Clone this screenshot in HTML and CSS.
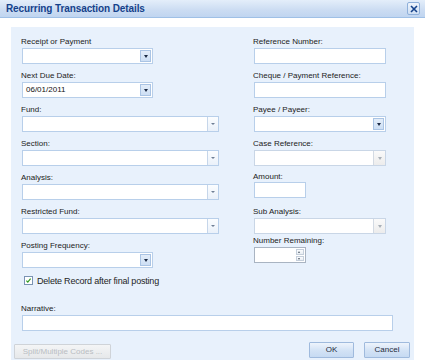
FILE: index.html
```html
<!DOCTYPE html>
<html>
<head>
<meta charset="utf-8">
<link rel="stylesheet" href="styles.css">
</head>
<body>
<div class="dialog">
  <div class="titlebar">
    <span class="title">Recurring Transaction Details</span>
    <span class="close"><svg width="8" height="8" viewBox="0 0 8 8"><path d="M1 1L7 7M7 1L1 7" stroke="#15428b" stroke-width="1.6"/></svg></span>
  </div>
  <div class="body">
    <div class="panel">
      <div class="cols">
        <div class="col col-left">
          <div class="field">
            <div class="label">Receipt or Payment</div>
            <div class="combo w-short"><span class="val"></span><span class="dd"><i class="tri"></i></span></div>
          </div>
          <div class="field">
            <div class="label">Next Due Date:</div>
            <div class="combo w-short"><span class="val">06/01/2011</span><span class="dd"><i class="tri"></i></span></div>
          </div>
          <div class="field">
            <div class="label">Fund:</div>
            <div class="combo w-long"><span class="val"></span><span class="dd light"><i class="tri"></i></span></div>
          </div>
          <div class="field">
            <div class="label">Section:</div>
            <div class="combo w-long"><span class="val"></span><span class="dd light"><i class="tri"></i></span></div>
          </div>
          <div class="field">
            <div class="label">Analysis:</div>
            <div class="combo w-long"><span class="val"></span><span class="dd light"><i class="tri"></i></span></div>
          </div>
          <div class="field">
            <div class="label">Restricted Fund:</div>
            <div class="combo w-long"><span class="val"></span><span class="dd light"><i class="tri"></i></span></div>
          </div>
          <div class="field last">
            <div class="label">Posting Frequency:</div>
            <div class="combo w-short"><span class="val"></span><span class="dd"><i class="tri"></i></span></div>
          </div>
          <div class="check">
            <span class="box"><svg width="9" height="9" viewBox="0 0 9 9"><path d="M1.8 4.6L3.6 6.6L7.2 2" fill="none" stroke="#2f9a1e" stroke-width="1.5"/></svg></span>
            <span class="check-text">Delete Record after final posting</span>
          </div>
        </div>
        <div class="col col-right">
          <div class="field">
            <div class="label">Reference Number:</div>
            <div class="text w-mid"></div>
          </div>
          <div class="field">
            <div class="label">Cheque / Payment Reference:</div>
            <div class="text w-mid"></div>
          </div>
          <div class="field">
            <div class="label">Payee / Payeer:</div>
            <div class="combo w-mid"><span class="val"></span><span class="dd"><i class="tri"></i></span></div>
          </div>
          <div class="field">
            <div class="label">Case Reference:</div>
            <div class="combo w-mid disabled"><span class="val"></span><span class="dd off"><i class="tri"></i></span></div>
          </div>
          <div class="field amount">
            <div class="label">Amount:</div>
            <div class="text w-tiny"></div>
          </div>
          <div class="field sub">
            <div class="label">Sub Analysis:</div>
            <div class="combo w-mid disabled"><span class="val"></span><span class="dd off"><i class="tri"></i></span></div>
          </div>
          <div class="field">
            <div class="label">Number Remaining:</div>
            <div class="spinner w-tiny"><span class="val"></span><span class="spin"><i class="up"></i><i class="down"></i></span></div>
          </div>
        </div>
      </div>
      <div class="field narrative">
        <div class="label">Narrative:</div>
        <div class="text w-full"></div>
      </div>
      <div class="buttons">
        <span class="btn btn-disabled">Split/Multiple Codes ...</span>
        <span class="spacer"></span>
        <span class="btn btn-ok">OK</span>
        <span class="btn btn-cancel">Cancel</span>
      </div>
    </div>
  </div>
</div>
</body>
</html>
```

FILE: styles.css
```css
html, body {
  margin: 0;
  padding: 0;
  background: #ffffff;
}
.dialog {
  width: 425px;
  height: 362px;
  font-family: "Liberation Sans", Arial, sans-serif;
  color: #1e1e1e;
  background: #ffffff;
  overflow: hidden;
}
.titlebar {
  height: 17px;
  border-bottom: 1px solid #9fc0e6;
  background: linear-gradient(#e4eefa, #cbdcf2 60%, #c0d5f0);
  display: flex;
  align-items: center;
  padding: 0 5px 0 6px;
}
.title {
  flex: 1;
  font-size: 10px;
  font-weight: bold;
  color: #15428b;
  letter-spacing: -0.1px;
}
.close {
  width: 11px;
  height: 11px;
  border: 1px solid #8fb0da;
  border-radius: 2px;
  background: linear-gradient(#eef4fc, #cfdff3);
  display: flex;
  align-items: center;
  justify-content: center;
}
.body {
  padding: 9px 11px 0 11px;
}
.panel {
  height: 333px;
  box-sizing: border-box;
  background: #e8f1fc;
  padding: 9px 0 0 10px;
}
.cols {
  display: flex;
}
.col-left {
  width: 230px;
}
.col-right {
  width: 150px;
  padding-left: 2px;
}
.field {
  margin-bottom: 6px;
}
.label {
  font-size: 8px;
  line-height: 12px;
  height: 12px;
  padding-left: 0;
  color: #222;
  white-space: nowrap;
}
.w-short { width: 131px; }
.w-long { width: 197px; }
.w-mid { width: 132px; }
.w-tiny { width: 52px; }
.w-full { width: 371px; }
.combo, .text, .spinner {
  box-sizing: border-box;
  height: 16px;
  margin-left: 1px;
  border: 1px solid #b8cfea;
  background: #ffffff;
  display: flex;
  align-items: stretch;
}
.val {
  flex: 1;
  font-size: 8px;
  line-height: 14px;
  padding-left: 3px;
  color: #111;
}
.dd {
  width: 9px;
  margin: 1px;
  border: 1px solid #aac4e4;
  background: linear-gradient(#e3edf9, #cddff4);
  display: flex;
  align-items: center;
  justify-content: center;
}
.tri {
  width: 0;
  height: 0;
  border-left: 2.5px solid transparent;
  border-right: 2.5px solid transparent;
  border-top: 3px solid #1c2a44;
}
.dd.light {
  margin: 0;
  width: 10px;
  border: none;
  border-left: 1px solid #c6d6ea;
  background: linear-gradient(#fbfdff, #eaf1fa);
}
.dd.light .tri {
  border-top-color: #6f7f95;
  border-left-width: 2px;
  border-right-width: 2px;
  border-top-width: 2.5px;
}
.combo.disabled {
  border-color: #c9d6e6;
}
.dd.off {
  margin: 0;
  width: 11px;
  border: none;
  border-left: 1px solid #d3dae3;
  background: linear-gradient(#fafafa, #ececec);
}
.dd.off .tri {
  border-top-color: #a9b0b8;
}
.field.last {
  margin-bottom: 0;
}
.field.amount .label {
  height: 10px;
  line-height: 10px;
  margin-top: 1px;
}
.field.amount {
  margin-bottom: 8px;
}
.field.sub {
  margin-bottom: 1px;
}
.spinner {
  border-color: #a9b4c2;
}
.spin {
  width: 8px;
  margin: 1px 1px 1px 0;
  display: flex;
  flex-direction: column;
  gap: 1px;
}
.spin i {
  flex: 1;
  border: 1px solid #c5cfdb;
  background: linear-gradient(#fbfcfe, #e9eef4);
  position: relative;
}
.spin i::after {
  content: "";
  position: absolute;
  left: 1px;
  top: 1px;
  border-left: 1.5px solid transparent;
  border-right: 1.5px solid transparent;
}
.spin .up::after {
  border-bottom: 2px solid #55606e;
}
.spin .down::after {
  border-top: 2px solid #55606e;
}
.check {
  display: flex;
  align-items: center;
  margin-top: 7px;
  height: 11px;
  padding-left: 3px;
}
.box {
  width: 9px;
  height: 9px;
  box-sizing: border-box;
  border: 1px solid #7a93b3;
  background: #ffffff;
  display: flex;
  align-items: center;
  justify-content: center;
  overflow: hidden;
}
.check-text {
  margin-left: 4px;
  font-size: 9px;
  letter-spacing: -0.2px;
  color: #1e1e1e;
}
.narrative {
  margin-top: 17px;
  margin-bottom: 0;
}
.buttons {
  display: flex;
  align-items: flex-start;
  margin: 11px 4px 0 -7px;
  gap: 10px;
}
.spacer {
  flex: 1;
}
.btn {
  box-sizing: border-box;
  height: 16px;
  font-size: 8px;
  line-height: 14px;
  text-align: center;
  border: 1px solid #9fbadd;
  background: linear-gradient(#eef4fc, #d2e2f5 55%, #c6daf2);
  color: #1f2a3a;
  border-radius: 1px;
}
.btn-ok { width: 45px; }
.btn-cancel { width: 46px; }
.btn-disabled {
  width: 97px;
  margin-top: 2px;
  height: 15px;
  line-height: 13px;
  border-color: #cfd3d8;
  background: linear-gradient(#f4f5f6, #e6e8ea);
  color: #b9bdc2;
}
```
